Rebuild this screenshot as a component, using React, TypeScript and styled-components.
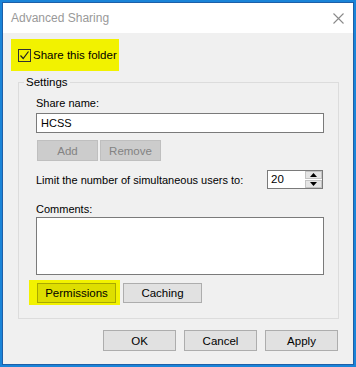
import styled, {createGlobalStyle} from "styled-components";

const GlobalStyle = createGlobalStyle`
    html, body {
        margin: 0;
        padding: 0;
    }
    body {
        width: 356px;
        height: 367px;
        background: #1a84d8;
        font-family: "Liberation Sans", Arial, sans-serif;
        font-size: 11px;
        color: #000;
        overflow: hidden;
    }
`

const CloseIcon = () => (
    <svg width="11" height="11" viewBox="0 0 11 11">
        <path d="M0.5 0.5 L10.5 10.5 M10.5 0.5 L0.5 10.5" stroke="#8a8a8a" strokeWidth="1.1" fill="none"/>
    </svg>
)

const Arrow = ({up}: {up?: boolean}) => (
    <svg width="7" height="4" viewBox="0 0 7 4">
        <path d={up ? "M0 4 L3.5 0 L7 4 Z" : "M0 0 L7 0 L3.5 4 Z"} fill="#000"/>
    </svg>
)

export default function App() {
    return (
        <>
            <GlobalStyle/>
            <Window>
                <TitleBar>
                    <Title>Advanced Sharing</Title>
                    <CloseIcon/>
                </TitleBar>

                <Body>
                    <Highlight>
                        <CheckRow>
                            <CheckBox>
                                <svg width="11" height="11" viewBox="0 0 11 11">
                                    <path d="M1.5 5.5 L4.2 8.5 L9.5 1.5" stroke="#222" strokeWidth="1.2" fill="none"/>
                                </svg>
                            </CheckBox>
                            Share this folder
                        </CheckRow>
                    </Highlight>

                    <Group>
                        <Legend>Settings</Legend>

                        <Label>Share name:</Label>
                        <TextBox>HCSS</TextBox>

                        <ButtonRow>
                            <Button disabled>Add</Button>
                            <Button disabled>Remove</Button>
                        </ButtonRow>

                        <LimitRow>
                            <span>Limit the number of simultaneous users to:</span>
                            <Spin>
                                <SpinValue>20</SpinValue>
                                <SpinButtons>
                                    <SpinButton><Arrow up/></SpinButton>
                                    <SpinButton><Arrow/></SpinButton>
                                </SpinButtons>
                            </Spin>
                        </LimitRow>

                        <CommentsLabel>Comments:</CommentsLabel>
                        <TextArea/>

                        <ActionRow>
                            <ButtonHighlight>
                                <Button $width={79} $marked>Permissions</Button>
                            </ButtonHighlight>
                            <Button $width={79}>Caching</Button>
                        </ActionRow>
                    </Group>

                    <Footer>
                        <Button $width={73} $height={21}>OK</Button>
                        <Button $width={73} $height={21}>Cancel</Button>
                        <Button $width={73} $height={21}>Apply</Button>
                    </Footer>
                </Body>
            </Window>
        </>
    );
}

const Window = styled.div`
    position: absolute;
    left: 2px;
    top: 2px;
    width: 350px;
    height: 361px;
    border: 1px solid #1d5fa8;
    display: flex;
    flex-direction: column;
    background: #f0f0f0;
`

const TitleBar = styled.div`
    height: 30px;
    background: #fff;
    display: flex;
    align-items: center;
    justify-content: space-between;
    padding: 0 9px 0 8px;
`

const Title = styled.span`
    color: #999;
    font-size: 12px;
    margin-top: -1px;
`

const Body = styled.div`
    flex: 1;
    display: flex;
    flex-direction: column;
    padding-top: 6px;
`

const Highlight = styled.div`
    margin-left: 8px;
    width: 108px;
    height: 32px;
    background: #f2f200;
    display: flex;
    align-items: center;
    padding-left: 7px;
    box-sizing: border-box;
`

const CheckRow = styled.label`
    display: flex;
    align-items: center;
    gap: 2px;
    font-size: 11.5px;
`

const CheckBox = styled.span`
    width: 11px;
    height: 11px;
    border: 1px solid #333;
    display: flex;
    align-items: center;
    justify-content: center;
`

const Group = styled.fieldset`
    margin: 3px 14px 0 15px;
    padding: 5px 14px 13px 17px;
    border: 1px solid #dcdcdc;
    display: flex;
    flex-direction: column;
`

const Legend = styled.legend`
    padding: 0 2px;
    margin-left: -12px;
    line-height: 16px;
    font-size: 11.5px;
`

const Label = styled.div`
    line-height: 16px;
`

const TextBox = styled.div`
    margin-top: 2px;
    height: 20px;
    box-sizing: border-box;
    border: 1px solid #7a7a7a;
    background: #fff;
    padding-left: 4px;
    line-height: 18px;
`

const ButtonRow = styled.div`
    display: flex;
    gap: 2px;
    margin: 7px 0 0 1px;
`

const Button = styled.button<{$width?: number; $height?: number; $marked?: boolean}>`
    width: ${p => p.$width ?? 61}px;
    height: ${p => p.$height ?? 20}px;
    box-sizing: border-box;
    padding: 0;
    border: 1px solid ${p => p.$marked ? "#a9a900" : "#adadad"};
    background: ${p => p.$marked ? "#dede00" : "#e1e1e1"};
    font-family: inherit;
    font-size: 11.5px;
    color: #000;

    &:disabled {
        background: #cccccc;
        border-color: #bfbfbf;
        color: #838383;
        height: 21px;
    }
`

const LimitRow = styled.div`
    display: flex;
    align-items: center;
    justify-content: space-between;
    margin-top: 9px;
    padding-right: 1px;
`

const Spin = styled.div`
    display: flex;
    height: 19px;
    width: 56px;
    box-sizing: border-box;
    border: 1px solid #7a7a7a;
    background: #fff;
`

const SpinValue = styled.div`
    flex: 1;
    padding-left: 3px;
    line-height: 17px;
    font-size: 11.5px;
`

const SpinButtons = styled.div`
    width: 17px;
    display: flex;
    flex-direction: column;
    gap: 1px;
    background: #fff;
`

const SpinButton = styled.div`
    flex: 1;
    background: #e5e5e5;
    border: 1px solid #c4c4c4;
    display: flex;
    align-items: center;
    justify-content: center;
`

const CommentsLabel = styled.div`
    margin-top: 13px;
    line-height: 15px;
`

const TextArea = styled.div`
    height: 58px;
    box-sizing: border-box;
    border: 1px solid #7a7a7a;
    background: #fff;
`

const ActionRow = styled.div`
    display: flex;
    align-items: center;
    gap: 3px;
    margin: 5px 0 0 -7px;
`

const ButtonHighlight = styled.div`
    background: #f2f200;
    padding: 3px 4px 2px 8px;
    display: flex;
`

const Footer = styled.div`
    display: flex;
    justify-content: flex-end;
    gap: 8px;
    margin: 11px 15px 0 0;
`
